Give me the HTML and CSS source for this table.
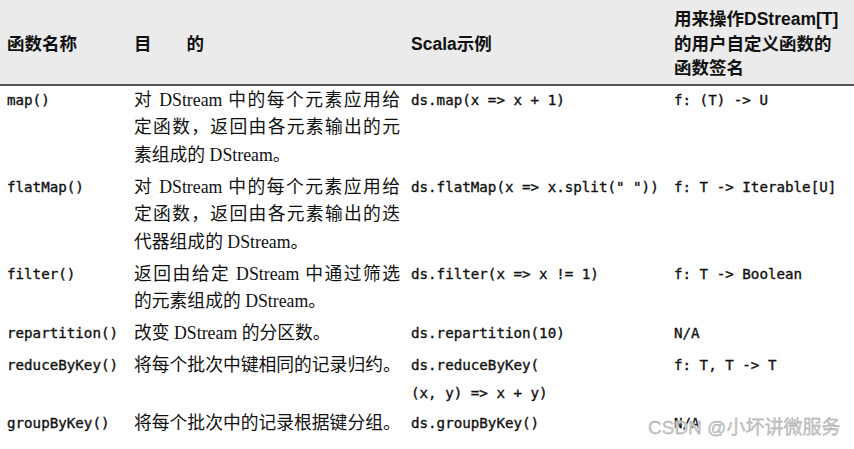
FILE: index.html
```html
<!DOCTYPE html>
<html lang="zh-CN">
<head>
<meta charset="utf-8">
<title>DStream 转化操作</title>
<link rel="stylesheet" href="styles.css">
</head>
<body>
<div class="table">
  <div class="row head">
    <div class="cell c1">函数名称</div>
    <div class="cell c2">目　　的</div>
    <div class="cell c3">Scala示例</div>
    <div class="cell c4">用来操作DStream[T]<br>的用户自定义函数的<br>函数签名</div>
  </div>
  <div class="row">
    <div class="cell c1 mono">map()</div>
    <div class="cell c2 desc"><span class="ln j">对 DStream 中的每个元素应用给</span><span class="ln j">定函数，返回由各元素输出的元</span><span class="ln">素组成的 DStream。</span></div>
    <div class="cell c3 mono">ds.map(x =&gt; x + 1)</div>
    <div class="cell c4 mono">f: (T) -&gt; U</div>
  </div>
  <div class="row">
    <div class="cell c1 mono">flatMap()</div>
    <div class="cell c2 desc"><span class="ln j">对 DStream 中的每个元素应用给</span><span class="ln j">定函数，返回由各元素输出的迭</span><span class="ln">代器组成的 DStream。</span></div>
    <div class="cell c3 mono">ds.flatMap(x =&gt; x.split(" "))</div>
    <div class="cell c4 mono">f: T -&gt; Iterable[U]</div>
  </div>
  <div class="row">
    <div class="cell c1 mono">filter()</div>
    <div class="cell c2 desc"><span class="ln j">返回由给定 DStream 中通过筛选</span><span class="ln">的元素组成的 DStream。</span></div>
    <div class="cell c3 mono">ds.filter(x =&gt; x != 1)</div>
    <div class="cell c4 mono">f: T -&gt; Boolean</div>
  </div>
  <div class="row">
    <div class="cell c1 mono">repartition()</div>
    <div class="cell c2 desc"><span class="ln">改变 DStream 的分区数。</span></div>
    <div class="cell c3 mono">ds.repartition(10)</div>
    <div class="cell c4 mono">N/A</div>
  </div>
  <div class="row">
    <div class="cell c1 mono">reduceByKey()</div>
    <div class="cell c2 desc"><span class="ln">将每个批次中键相同的记录归约。</span></div>
    <div class="cell c3 mono">ds.reduceByKey(<br>(x, y) =&gt; x + y)</div>
    <div class="cell c4 mono">f: T, T -&gt; T</div>
  </div>
  <div class="row last">
    <div class="cell c1 mono">groupByKey()</div>
    <div class="cell c2 desc"><span class="ln">将每个批次中的记录根据键分组。</span></div>
    <div class="cell c3 mono">ds.groupByKey()</div>
    <div class="cell c4 mono">N/A</div>
  </div>
</div>
<div class="watermark">CSDN @小坏讲微服务</div>
</body>
</html>
```
FILE: styles.css
```css
html, body {
  margin: 0;
  padding: 0;
  background: #ffffff;
}
body {
  width: 854px;
  height: 449px;
  position: relative;
  overflow: hidden;
  color: #111111;
  font-family: "Liberation Serif", "Noto Sans CJK SC", serif;
}
.table {
  display: flex;
  flex-direction: column;
  gap: 4.5px;
}
.row {
  display: grid;
  grid-template-columns: 127px 277px 263px 1fr;
  padding-left: 7px;
}
.row.last {
  margin-top: -2px;
}
.row.head {
  background: #ebebeb;
  border-bottom: 2px solid #555555;
  padding-top: 7px;
  padding-bottom: 3px;
  margin-bottom: -3.3px;
  font-family: "Liberation Sans", "Noto Sans CJK SC", sans-serif;
  font-weight: 700;
  font-size: 17.5px;
  line-height: 24.5px;
  align-items: center;
}
.mono {
  font-family: "DejaVu Sans Mono", "Liberation Mono", "Noto Sans CJK SC", monospace;
  font-size: 14.2px;
  line-height: 27.5px;
  white-space: pre;
  -webkit-text-stroke: 0.35px #111111;
}
.desc {
  font-size: 17.8px;
  line-height: 27.5px;
  width: 266px;
}
.ln {
  display: block;
  white-space: nowrap;
}
.ln.j {
  text-align: justify;
  text-align-last: justify;
}
.watermark {
  position: absolute;
  left: 648px;
  top: 416px;
  font-family: "Liberation Sans", "Noto Sans CJK SC", sans-serif;
  font-size: 19px;
  line-height: 23px;
  color: #c8c8c8;
  -webkit-text-stroke: 0.3px #a0a0a0;
  text-shadow: 0 0 2px #ffffff, 0 0 1px #ffffff;
  white-space: nowrap;
}
```
